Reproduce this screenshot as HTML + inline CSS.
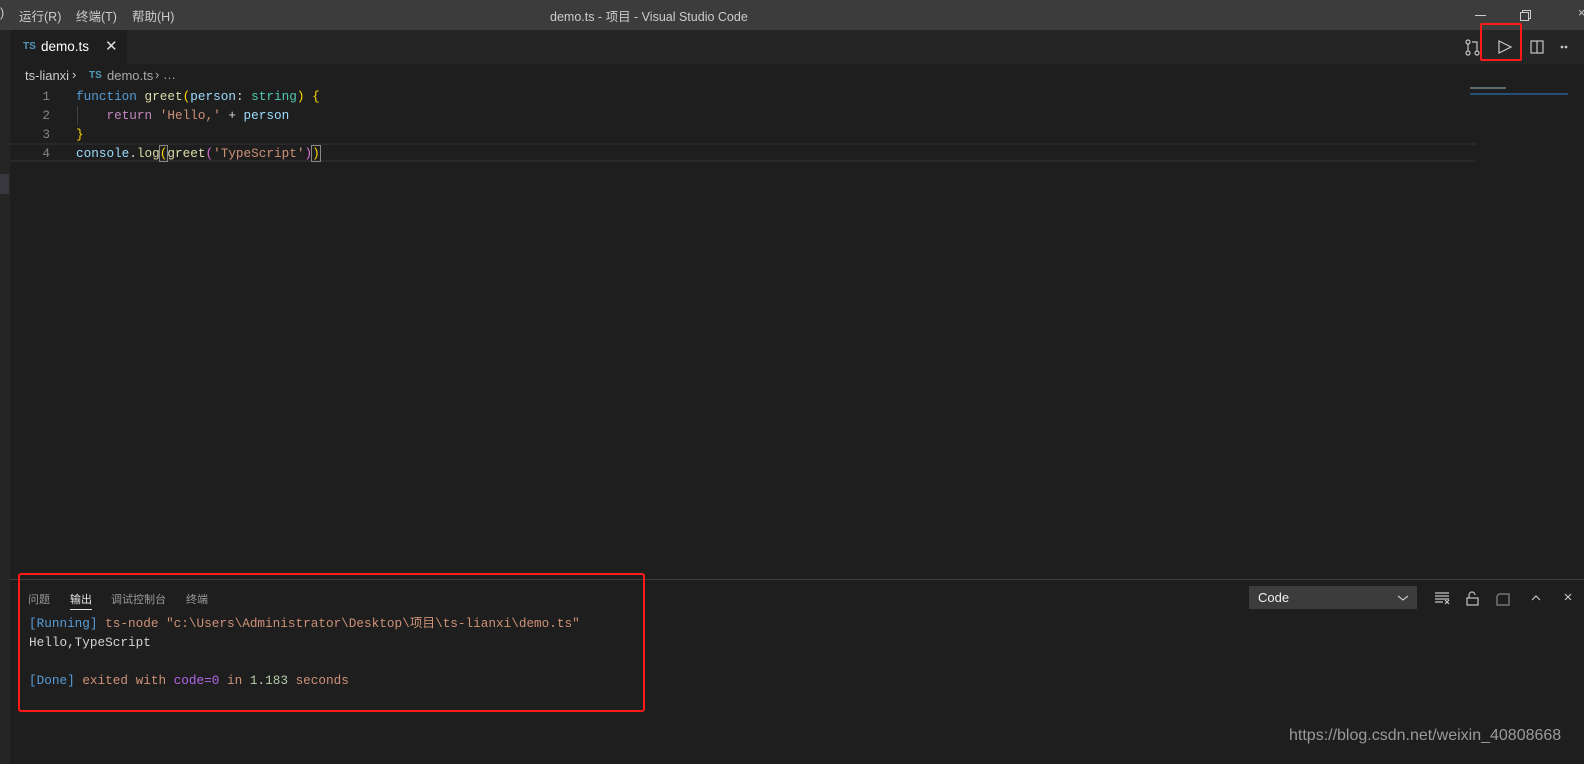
<!DOCTYPE html>
<html><head><meta charset="utf-8"><style>
*{margin:0;padding:0;box-sizing:border-box}
body{width:1584px;height:764px;background:#1e1e1e;position:relative;overflow:hidden;font-family:"Liberation Sans","Noto Sans CJK SC",sans-serif;color:#ccc}
.abs{position:absolute}
.mono{font-family:"Liberation Mono","Noto Sans CJK SC",monospace;font-size:12.7px;white-space:pre}
.title{left:0;top:0;width:1584px;height:30px;background:#3c3c3c;font-size:12.5px;color:#ccc}
.tabs{left:10px;top:30px;width:1574px;height:34px;background:#252526}
.kw{color:#569cd6}.fn{color:#dcdcaa}.pa{color:#9cdcfe}.ty{color:#4ec9b0}.st{color:#ce9178}.br{color:#ffd700}.ctl{color:#c586c0}.br2{color:#da70d6}
</style></head><body>
<div class="abs title">
 <span class="abs" style="left:0;top:6px">)</span>
 <span class="abs" style="left:19px;top:6px">运行(R)</span>
 <span class="abs" style="left:76px;top:6px">终端(T)</span>
 <span class="abs" style="left:132px;top:6px">帮助(H)</span>
 <span class="abs" style="left:550px;top:6px">demo.ts - 项目 - Visual Studio Code</span>
 <div class="abs" style="left:1475px;top:15px;width:11px;height:1px;background:#ccc"></div>
 <div class="abs" style="left:1522px;top:10px;width:9px;height:9px;border:1px solid #ccc"></div>
 <div class="abs" style="left:1520px;top:12px;width:9px;height:9px;border:1px solid #ccc;background:#3c3c3c"></div>
 <span class="abs" style="left:1578px;top:6px">×</span>
</div>
<div class="abs" style="left:0;top:30px;width:10px;height:734px;background:#252526"></div>
<div class="abs" style="left:0;top:174px;width:9px;height:20px;background:#37373d"></div>
<div class="abs tabs"></div>
<div class="abs" style="left:10px;top:30px;width:117px;height:34px;background:#1e1e1e"></div>
<span class="abs" style="left:23px;top:41px;font-size:10px;font-weight:bold;color:#519aba">TS</span>
<span class="abs" style="left:41px;top:39px;font-size:13.5px;color:#fff">demo.ts</span>
<span class="abs" style="left:105px;top:37px;font-size:15px;color:#ddd">✕</span>
<svg class="abs" style="left:1462px;top:36px" width="110" height="22" fill="none" stroke="#c5c5c5" stroke-width="1.2">
 <circle cx="6" cy="6" r="2"/><circle cx="15" cy="17" r="2"/><circle cx="6" cy="17" r="2"/>
 <path d="M6 8v7M10 6h5v9"/>
 <path d="M37 5l12 6-12 6z"/>
 <rect x="69" y="5" width="12" height="12"/><path d="M75 5v12"/>
 <circle cx="100" cy="11" r=".8" fill="#c5c5c5"/><circle cx="104" cy="11" r=".8" fill="#c5c5c5"/>
</svg>
<div class="abs" style="left:1480px;top:23px;width:42px;height:38px;border:2px solid #ff1a1a;border-radius:2px"></div>
<span class="abs" style="left:25px;top:68px;font-size:13px;color:#ccc">ts-lianxi</span>
<span class="abs" style="left:72px;top:67px;font-size:13px;color:#ccc">›</span>
<span class="abs" style="left:89px;top:70px;font-size:10px;font-weight:bold;color:#519aba">TS</span>
<span class="abs" style="left:107px;top:68px;font-size:13px;color:#aaa">demo.ts</span>
<span class="abs" style="left:155px;top:67px;font-size:13px;color:#aaa">› …</span>
<div class="abs" style="left:10px;top:143px;width:1466px;height:19px;border-top:2px solid #282828;border-bottom:2px solid #282828"></div>
<div class="abs mono" style="left:30px;top:87px;line-height:19px;color:#858585;text-align:right;width:20px">1
2
3
4</div>
<div class="abs" style="left:77px;top:106px;width:1px;height:19px;background:#404040"></div>
<div class="abs mono" style="left:76px;top:87px;line-height:19px;color:#d4d4d4"><span class="kw">function</span> <span class="fn">greet</span><span class="br">(</span><span class="pa">person</span>: <span class="ty">string</span><span class="br">)</span> <span class="br">{</span>
    <span class="ctl">return</span> <span class="st">'Hello,'</span> + <span class="pa">person</span>
<span class="br">}</span>
<span class="pa">console</span>.<span class="fn">log</span><span class="br" style="outline:1px solid #888">(</span><span class="fn">greet</span><span class="br2">(</span><span class="st">'TypeScript'</span><span class="br2">)</span><span class="br" style="outline:1px solid #888">)</span></div>
<div class="abs" style="left:1470px;top:87px;width:36px;height:2px;background:#5a6a70"></div>
<div class="abs" style="left:1470px;top:93px;width:98px;height:2px;background:#264f78"></div>
<div class="abs" style="left:10px;top:579px;width:1574px;height:1px;background:#3c3c3c"></div>
<span class="abs" style="left:28px;top:591px;font-size:11px;color:#999">问题</span>
<span class="abs" style="left:70px;top:591px;font-size:11px;color:#e7e7e7">输出</span>
<div class="abs" style="left:70px;top:609px;width:22px;height:1px;background:#e7e7e7"></div>
<span class="abs" style="left:111px;top:591px;font-size:11px;color:#999">调试控制台</span>
<span class="abs" style="left:186px;top:591px;font-size:11px;color:#999">终端</span>
<div class="abs" style="left:1249px;top:586px;width:168px;height:23px;background:#3c3c3c"></div>
<span class="abs" style="left:1258px;top:590px;font-size:13px;color:#f0f0f0">Code</span>
<svg class="abs" style="left:1395px;top:590px" width="180" height="16" fill="none" stroke="#c5c5c5" stroke-width="1.2">
 <path d="M3 6l5 4 5-4"/>
 <path d="M40 3h14M40 6h14M40 9h14M40 12h8M50 10l4 4M54 10l-4 4"/>
 <rect x="72" y="8" width="11" height="7"/><path d="M74 8V5a3 3 0 0 1 6 0"/>
 <path d="M104 4h10v11h-12V6z" stroke="#888"/>
 <path d="M137 10l4-4 4 4"/>
 <path d="M170 4l6 6M176 4l-6 6"/>
</svg>
<div class="abs mono" style="left:29px;top:614px;line-height:19px;color:#d4d4d4"><span style="color:#569cd6">[Running]</span> <span class="st">ts-node "c:\Users\Administrator\Desktop\项目\ts-lianxi\demo.ts"</span>
Hello,TypeScript

<span style="color:#569cd6">[Done]</span> <span class="st">exited with </span><span style="color:#b267e6">code=0</span> <span class="st">in</span> <span style="color:#b5cea8">1.183</span> <span class="st">seconds</span></div>
<div class="abs" style="left:18px;top:573px;width:627px;height:139px;border:2px solid #ff1a1a;border-radius:3px"></div>
<span class="abs" style="left:1289px;top:727px;font-size:16px;color:#9a9a9a;font-family:'Liberation Sans',sans-serif">https://blog.csdn.net/weixin_40808668</span>
</body></html>
